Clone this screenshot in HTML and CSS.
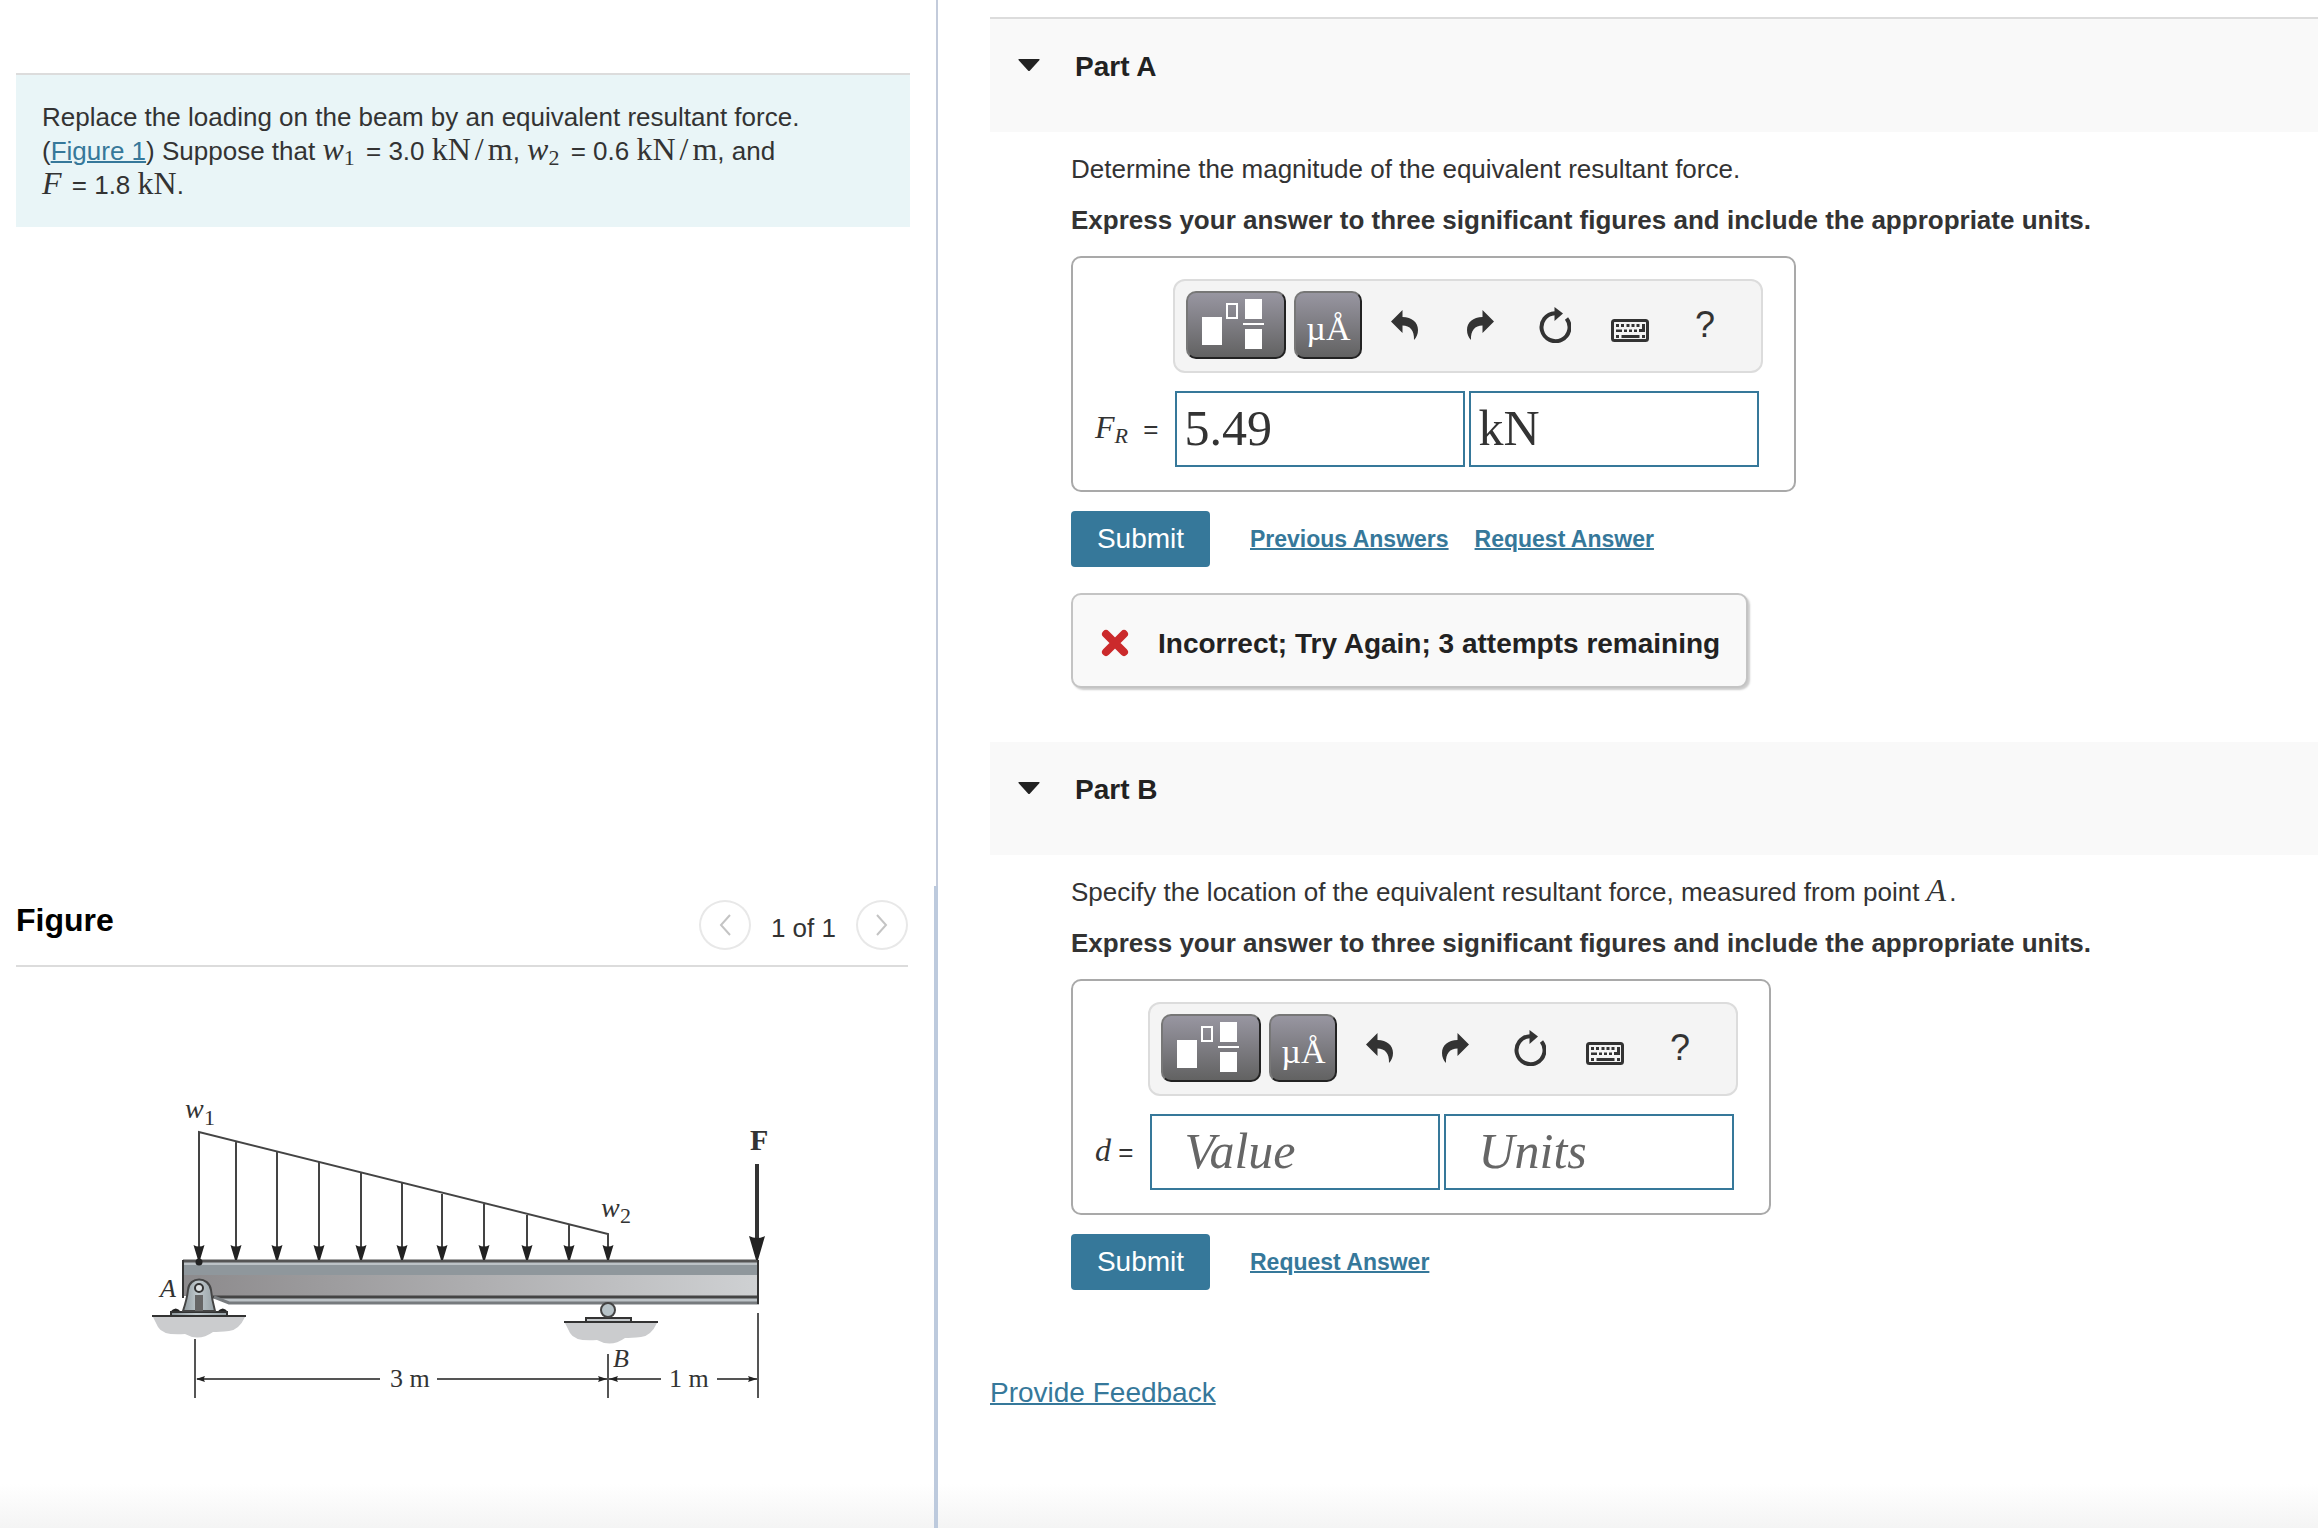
FILE: index.html
```html
<!DOCTYPE html>
<html lang="en">
<head>
<meta charset="utf-8">
<title>Equivalent resultant force</title>
<meta name="viewport" content="width=device-width, initial-scale=1">
<link rel="stylesheet" href="styles.css">
</head>
<body>
<svg class="defs" aria-hidden="true">
  <symbol id="templates" viewBox="0 0 96 64">
    <path fill="#fff" d="M14 24h20v28H14zM57 6h17v20H57zM57 36h17v20H57zM55 30h21v2H55z"/>
    <path fill="none" stroke="#fff" stroke-width="2" d="M39 11h10v14H39z"/>
  </symbol>
  <symbol id="undo" viewBox="0 0 28 30">
    <path d="M0 11.5 11.5 0v7C21 7 27 12.500 27 20c0 4-1.500 7.500-4 10 .5-9.500-4-14.500-11.500-14.500V23z"/>
  </symbol>
  <symbol id="redo" viewBox="0 0 28 30">
    <path d="M28 11.500 16.500 0v7C7 7 1 12.500 1 20c0 4 1.500 7.500 4 10-.5-9.500 4-14.500 11.500-14.500V23z"/>
  </symbol>
  <symbol id="reset" viewBox="0 0 32 36">
    <path fill="none" stroke="currentColor" stroke-width="4" d="M16 6.200A14 14 0 1 0 27.500 11.500"/>
    <path d="M15.500 0 24 6.500 15.500 14z"/>
  </symbol>
  <symbol id="keyboard" viewBox="0 0 38 23">
    <rect x="1.500" y="1.500" width="35" height="20" rx="2" fill="none" stroke="currentColor" stroke-width="3"/>
    <path d="M5 5h3v3H5zM10 5h3v3h-3zM15.500 5h3v3h-3zM20.500 5h3v3h-3zM25.500 5h3v3h-3zM31 5h3v8h-6v-3h3zM5 10.500h6v2.500H5zM13 10.500h3V13h-3zM18 10.500h3V13h-3zM23 10.500h3V13h-3zM5 16h3v3H5zM10.500 16h18v3h-18zM31 16h3v3h-3z"/>
  </symbol>
  <symbol id="caret" viewBox="0 0 22 12">
    <path d="M1 0h20q1 0 .5 1L12 11.500q-1 1-2 0L.5 1Q0 0 1 0z"/>
  </symbol>
</svg>

<main class="page">
  <div class="left">
    <section class="problem-pane">
      <div class="problem">
        <p>Replace the loading on the beam by an equivalent resultant force.<br>
        (<a href="#figure">Figure 1</a>) Suppose that <span class="math"><i>w</i><span class="sub">1</span></span> = 3.0 <span class="math">kN<span class="slash">/</span>m</span>, <span class="math"><i>w</i><span class="sub">2</span></span> = 0.6 <span class="math">kN<span class="slash">/</span>m</span>, and<br>
        <i class="math">F</i> = 1.8 <span class="math">kN</span>.</p>
      </div>
    </section>

    <section class="figure-pane" id="figure">
      <header class="figure-head">
        <h2>Figure</h2>
        <nav class="pager" aria-label="Figures">
          <button type="button" class="round" aria-label="Previous figure"><svg width="12" height="22" viewBox="0 0 12 22"><path d="M11 1 2 11l9 10"/></svg></button>
          <span>1 of 1</span>
          <button type="button" class="round" aria-label="Next figure"><svg width="12" height="22" viewBox="0 0 12 22"><path d="m1 1 9 10-9 10"/></svg></button>
        </nav>
      </header>
      <svg class="beam" viewBox="140 1080 640 340" role="img" aria-label="Beam with a distributed load and a point force">
        <defs>
          <linearGradient id="web"><stop offset="0" stop-color="#8c8a8c"/><stop offset="1" stop-color="#cfd1d3"/></linearGradient>
          <linearGradient id="steel"><stop offset="0" stop-color="#8f999e"/><stop offset=".45" stop-color="#bfc8cc"/><stop offset="1" stop-color="#98a2a7"/></linearGradient>
          <path id="tip" d="M-5.500-15Q0-12 5.500-15L1 0h-2z"/>
          <path id="dim" d="M0 0 9-3Q7 0 9 3z"/>
          <path id="ground" d="M0 0H92Q86 13 76 14T60 15Q46 25 32 17 10 19 5 10 2 4 0 0z"/>
        </defs>
        <!-- beam -->
        <path fill="#8f979c" d="M183 1261h576v14H183z"/>
        <path fill="url(#web)" d="M183 1275h576v21H183z"/>
        <path fill="#bcc2c6" d="M183 1262h576v3H183zM214 1298h545l-1 5H229z"/>
        <path fill="none" stroke="#555" stroke-width="3" d="M183 1261h575"/>
        <path fill="none" stroke="#444" stroke-width="3" d="M213 1297h545"/>
        <path fill="none" stroke="#777b7e" stroke-width="3" d="m214 1297 15 6h530"/>
        <path fill="none" stroke="#333" stroke-width="2" d="M183 1260v38M758 1260v44"/>
        <!-- distributed load -->
        <g fill="none" stroke="#444" stroke-width="2">
          <path d="M199 1250v-118l409 102v16M236 1141v110M277 1152v99M319 1162v89M361 1173v78M402 1183v68M442 1194v57M484 1204v47M527 1215v36M569 1225v26"/>
          <path stroke="#333" stroke-width="4" d="M757 1164v80"/>
        </g>
        <g fill="#222">
          <use href="#tip" x="199" y="1260"/><use href="#tip" x="236" y="1260"/><use href="#tip" x="277" y="1260"/><use href="#tip" x="319" y="1260"/><use href="#tip" x="361" y="1260"/><use href="#tip" x="402" y="1260"/><use href="#tip" x="442" y="1260"/><use href="#tip" x="484" y="1260"/><use href="#tip" x="527" y="1260"/><use href="#tip" x="569" y="1260"/><use href="#tip" x="608" y="1260"/>
          <path d="M749 1236q8 4 16 0l-7 24h-2z"/>
          <circle cx="199" cy="1262" r="3.500"/>
        </g>
        <!-- pin support -->
        <use href="#ground" x="153" y="1317" fill="#cbccce"/>
        <path stroke="#333" stroke-width="2" d="M152 1316h94"/>
        <path fill="#222" d="M170 1312q6-7 11 0zM217 1312q6-7 11 0z"/>
        <path fill="url(#steel)" stroke="#333" stroke-width="2" d="M171 1312h56v4h-56z"/>
        <path fill="url(#steel)" stroke="#444" stroke-width="2" d="M183 1311q4-12 5-21c1-14 21-14 23 0q1 10 4 21z"/>
        <path fill="#666" d="M195 1295h8v16h-8z"/>
        <circle cx="199" cy="1288" r="4" fill="#dfe3e5" stroke="#333" stroke-width="2"/>
        <!-- roller support -->
        <use href="#ground" x="565" y="1323" fill="#cbccce"/>
        <path fill="#c5c9cc" stroke="#333" stroke-width="2" d="M586 1321v-3h45v3"/>
        <path stroke="#333" stroke-width="2" d="M564 1322h94"/>
        <circle cx="608" cy="1310" r="7" fill="#b7c3c8" stroke="#444" stroke-width="2"/>
        <!-- dimensions -->
        <path fill="none" stroke="#555" stroke-width="2" d="M195 1339v59M608 1354v44M758 1313v85M197 1379h183M437 1379h224M717 1379h40"/>
        <g fill="#222">
          <use href="#dim" transform="translate(196 1379)"/><use href="#dim" transform="translate(607 1379) scale(-1 1)"/>
          <use href="#dim" transform="translate(609 1379)"/><use href="#dim" transform="translate(757 1379) scale(-1 1)"/>
        </g>
        <g class="labels">
          <text class="var" x="185" y="1118">w</text><text class="index" x="204" y="1125">1</text>
          <text class="var" x="601" y="1217">w</text><text class="index" x="620" y="1223">2</text>
          <text class="force" x="750" y="1150">F</text>
          <text class="point" x="160" y="1297">A</text>
          <text class="point" x="613" y="1367">B</text>
          <text x="390" y="1387">3 m</text>
          <text x="669" y="1387">1 m</text>
        </g>
      </svg>
    </section>
  </div>

  <div class="right">
    <section class="part first">
      <header class="part-head"><svg class="caret" width="22" height="12"><use href="#caret"/></svg><h2>Part A</h2></header>
      <div class="part-body">
        <p>Determine the magnitude of the equivalent resultant force.</p>
        <p class="strong">Express your answer to three significant figures and include the appropriate units.</p>
        <div class="answer">
          <div class="toolbar">
            <button type="button" class="dark wide" aria-label="Templates"><svg width="96" height="64"><use href="#templates"/></svg></button>
            <button type="button" class="dark units" aria-label="Symbols">µÅ</button>
            <div class="tools">
              <button type="button" aria-label="Undo"><svg width="28" height="30"><use href="#undo"/></svg></button>
              <button type="button" aria-label="Redo"><svg width="28" height="30"><use href="#redo"/></svg></button>
              <button type="button" aria-label="Reset"><svg width="32" height="36"><use href="#reset"/></svg></button>
              <button type="button" aria-label="Keyboard shortcuts"><svg class="lowered" width="38" height="23"><use href="#keyboard"/></svg></button>
              <button type="button" aria-label="Help">?</button>
            </div>
          </div>
          <label for="fr"><span class="math"><i>F</i><i class="sub">R</i></span> =</label>
          <div class="fields">
            <input id="fr" type="text" value="5.49">
            <input type="text" value="kN" aria-label="Units of the force">
          </div>
        </div>
        <div class="actions">
          <button type="button" class="submit">Submit</button>
          <a href="#">Previous Answers</a>
          <a href="#">Request Answer</a>
        </div>
        <div class="feedback" role="status">
          <svg width="28" height="28" viewBox="0 0 28 28"><path d="m5 5 18 18M23 5 5 23"/></svg>
          <span>Incorrect; Try Again; 3 attempts remaining</span>
        </div>
      </div>
    </section>

    <section class="part">
      <header class="part-head"><svg class="caret" width="22" height="12"><use href="#caret"/></svg><h2>Part B</h2></header>
      <div class="part-body">
        <p>Specify the location of the equivalent resultant force, measured from point <i class="math">A</i>.</p>
        <p class="strong">Express your answer to three significant figures and include the appropriate units.</p>
        <div class="answer">
          <div class="toolbar">
            <button type="button" class="dark wide" aria-label="Templates"><svg width="96" height="64"><use href="#templates"/></svg></button>
            <button type="button" class="dark units" aria-label="Symbols">µÅ</button>
            <div class="tools">
              <button type="button" aria-label="Undo"><svg width="28" height="30"><use href="#undo"/></svg></button>
              <button type="button" aria-label="Redo"><svg width="28" height="30"><use href="#redo"/></svg></button>
              <button type="button" aria-label="Reset"><svg width="32" height="36"><use href="#reset"/></svg></button>
              <button type="button" aria-label="Keyboard shortcuts"><svg class="lowered" width="38" height="23"><use href="#keyboard"/></svg></button>
              <button type="button" aria-label="Help">?</button>
            </div>
          </div>
          <label for="d"><i class="math">d</i> =</label>
          <div class="fields">
            <input id="d" type="text" placeholder="Value">
            <input type="text" placeholder="Units" aria-label="Units of the distance">
          </div>
        </div>
        <div class="actions">
          <button type="button" class="submit">Submit</button>
          <a href="#">Request Answer</a>
        </div>
      </div>
    </section>
    <a class="provide" href="#">Provide Feedback</a>
  </div>
</main>
</body>
</html>
```

FILE: styles.css
```css
* { box-sizing: border-box; }

body {
  margin: 0;
  background: #fff;
  color: #333;
  font: 26px/34px "Liberation Sans", Arial, sans-serif;
}

h2, p { margin: 0; }
a { color: #36789a; text-decoration-thickness: 2px; }
button { font: inherit; color: inherit; cursor: pointer; }
.defs { display: none; }

.page {
  display: flex;
  min-height: 100vh;
  background: linear-gradient(to top, #f4f4f4, #fff 44px);
}

/* Problem and figure */
.left {
  flex: 0 0 938px;
  display: flex;
  flex-direction: column;
}

.problem-pane {
  flex: 0 0 58vh;
  padding: 73px 26px 0 16px;
  border-right: 2px solid #c3cbdb;
}

.problem {
  padding: 25px 26px;
  border-top: 2px solid #dcdcdc;
  background: #e9f5f7;
}

.math {
  font-family: "Liberation Serif", "Times New Roman", serif;
  font-size: 32px;
  line-height: 0;
}
p i.math { margin-right: 3px; }
.math .sub {
  margin-right: 4px;
  font-size: 22px;
  position: relative;
  top: 5px;
}
.math i.sub { margin-right: 8px; }
.math .slash { padding: 0 4px; }

.figure-pane {
  flex: 1;
  padding: 14px 26px 0 16px;
  border-right: 4px solid #bdcadd;
}

.figure-head {
  display: flex;
  justify-content: space-between;
  height: 67px;
  border-bottom: 2px solid #dcdcdc;
}
.figure-head h2 {
  padding-top: 3px;
  color: #000;
  font-size: 32px;
  line-height: 34px;
}

.pager {
  display: flex;
  gap: 20px;
}
.pager span { padding-top: 11px; }

.round {
  display: grid;
  place-items: center;
  width: 52px;
  height: 50px;
  padding: 0;
  border: 2px solid #e8e8e8;
  border-radius: 50%;
  background: #fff;
}
.round path {
  fill: none;
  stroke: #c4c4c4;
  stroke-width: 2;
}

.beam {
  display: block;
  width: 640px;
  max-width: 100%;
  margin: 113px 0 0 124px;
}
.labels {
  fill: #333;
  font-family: "Liberation Serif", "Times New Roman", serif;
  font-size: 26px;
}
.var { font-size: 28px; font-style: italic; }
.index { font-size: 22px; }
.point { font-style: italic; }
.force { font-size: 30px; font-weight: bold; }

/* Parts */
.right {
  flex: 1;
  padding: 17px 0 60px 52px;
}

.part { padding-bottom: 54px; }
.part.first { border-top: 2px solid #dcdcdc; }

.part-head {
  display: flex;
  align-items: flex-start;
  gap: 35px;
  height: 113px;
  padding: 31px 28px;
  background: #f9f9f9;
  color: #222;
}
.part-head h2 { font-size: 28px; line-height: 34px; }
.caret { margin-top: 9px; fill: #222; }

.part-body { padding: 20px 20px 0 81px; }
.strong { margin-top: 17px; font-weight: bold; }

.answer {
  display: grid;
  grid-template-columns: auto 590px;
  row-gap: 18px;
  align-items: center;
  width: fit-content;
  margin-top: 19px;
  padding: 21px 31px 23px 22px;
  border: 2px solid #a9a9a9;
  border-radius: 10px;
}
.answer label { padding-right: 15px; }

.toolbar {
  grid-column: 2;
  display: flex;
  gap: 8px;
  height: 94px;
  padding: 10px 11px;
  border: 2px solid #dcdcdc;
  border-radius: 12px;
  background: #f4f4f4;
}

.dark {
  width: 68px;
  height: 68px;
  padding: 0;
  border: 2px solid;
  border-color: #777 #222 #222 #777;
  border-radius: 10px;
  background: linear-gradient(#9896a1, #626262);
  color: #fff;
  font-family: "Liberation Serif", "Times New Roman", serif;
  font-size: 34px;
}
.dark svg { display: block; }
.wide { width: 100px; }
.units { padding-top: 8px; }

.tools {
  display: flex;
  margin-left: -3px;
}
.tools button {
  display: grid;
  place-items: center;
  width: 75px;
  height: 68px;
  padding: 0;
  border: 0;
  background: none;
  font-size: 36px;
}
.tools svg { fill: currentColor; }
.lowered { margin-top: 10px; }

.fields {
  display: flex;
  gap: 4px;
  padding-left: 2px;
}
.fields input {
  width: 290px;
  height: 76px;
  padding: 0 7px 2px;
  border: 2px solid #36789a;
  border-radius: 0;
  background: #fff;
  color: #333;
  font: 50px "Liberation Serif", "Times New Roman", serif;
}
.fields input::placeholder { color: #666; font-style: italic; }
.fields input:placeholder-shown { padding-left: 32px; }

.actions {
  display: flex;
  align-items: center;
  gap: 26px;
  margin-top: 19px;
  font-size: 23px;
  font-weight: bold;
}
.submit {
  width: 139px;
  height: 56px;
  margin-right: 14px;
  padding: 0;
  border: 0;
  border-radius: 4px;
  background: #36789a;
  color: #fff;
  font-size: 28px;
  font-weight: normal;
}

.feedback {
  display: flex;
  align-items: center;
  gap: 29px;
  width: fit-content;
  height: 95px;
  margin-top: 26px;
  padding: 4px 26px 0 28px;
  border: 2px solid #c4c4c4;
  border-radius: 10px;
  background: #f9f9f9;
  box-shadow: 2px 2px 2px #ccc;
  color: #222;
  font-size: 28px;
  font-weight: bold;
}
.feedback span { padding-top: 3px; }
.feedback path {
  fill: none;
  stroke: #cb2a2c;
  stroke-width: 8;
  stroke-linecap: round;
}

.provide {
  display: inline-block;
  margin-top: 32px;
  font-size: 28px;
}
```
